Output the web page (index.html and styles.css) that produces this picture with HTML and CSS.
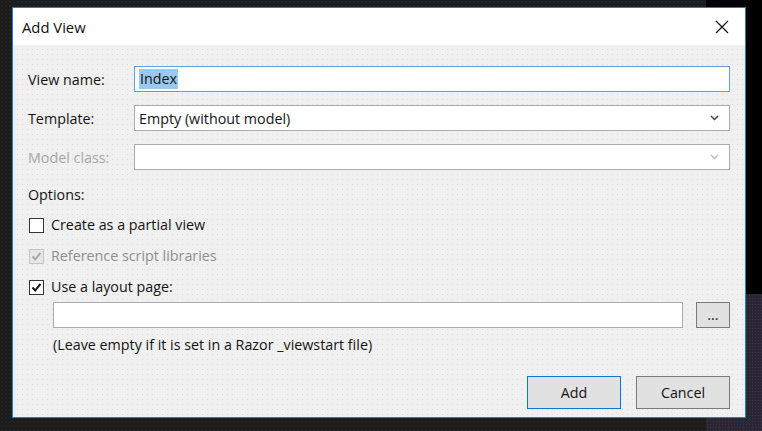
FILE: index.html
```html
<!DOCTYPE html>
<html>
<head>
<meta charset="utf-8">
<link rel="stylesheet" href="styles.css">
</head>
<body>
<div class="desk">
  <div class="bg-black"></div>
  <div class="bg-purple"></div>
  <div class="dialog">
    <div class="titlebar">
      <span class="title">Add View</span>
      <svg class="close" width="14" height="14" viewBox="0 0 14 14"><path d="M1 1 L13 13 M13 1 L1 13" stroke="#111" stroke-width="1.2" fill="none"/></svg>
    </div>
    <div class="body">
      <div class="form">
        <label class="lbl">View name:</label>
        <div class="field focused"><span class="sel">Index</span></div>
        <label class="lbl">Template:</label>
        <div class="field combo"><span>Empty (without model)</span><svg class="chev" width="9" height="6" viewBox="0 0 9 6"><path d="M1 1 L4.5 4.5 L8 1" stroke="#444" stroke-width="1.5" fill="none"/></svg></div>
        <label class="lbl disabled">Model class:</label>
        <div class="field combo"><span></span><svg class="chev" width="9" height="6" viewBox="0 0 9 6"><path d="M1 1 L4.5 4.5 L8 1" stroke="#bdbdbd" stroke-width="1.5" fill="none"/></svg></div>
      </div>
      <div class="options">Options:</div>
      <div class="check"><span class="box"></span><span>Create as a partial view</span></div>
      <div class="check disabled"><span class="box dis"><svg width="13" height="13" viewBox="0 0 13 13"><path d="M2.5 6.5 L5.2 9.5 L10.5 2.8" stroke="#a9a9a9" stroke-width="2" fill="none"/></svg></span><span>Reference script libraries</span></div>
      <div class="check"><span class="box"><svg width="13" height="13" viewBox="0 0 13 13"><path d="M2.5 6.5 L5.2 9.5 L10.5 2.8" stroke="#111" stroke-width="2" fill="none"/></svg></span><span>Use a layout page:</span></div>
      <div class="layout-row">
        <div class="field grow"></div>
        <button class="btn dots">...</button>
      </div>
      <div class="hint">(Leave empty if it is set in a Razor _viewstart file)</div>
      <div class="actions">
        <button class="btn primary">Add</button>
        <button class="btn">Cancel</button>
      </div>
    </div>
  </div>
</div>
</body>
</html>
```
FILE: styles.css
```css
html, body {
  margin: 0;
  padding: 0;
}
body {
  width: 762px;
  height: 431px;
  overflow: hidden;
  background: #1c1c1c;
  font-family: "Open Sans", "Noto Sans", "Liberation Sans", sans-serif;
  font-size: 14.3px;
  color: #141414;
}
.desk {
  position: relative;
  width: 762px;
  height: 431px;
  background-color: #1c1c1c;
  background-image: radial-gradient(circle, #2a2a2a 0.6px, transparent 0.8px);
  background-size: 4px 4px;
}
.bg-black {
  position: absolute;
  left: 706px;
  top: 0;
  width: 56px;
  height: 294px;
  background: #000;
}
.bg-purple {
  position: absolute;
  left: 706px;
  top: 294px;
  width: 56px;
  height: 137px;
  background-color: #2b2633;
  background-image: radial-gradient(circle, #3e3648 0.6px, transparent 0.8px);
  background-size: 3px 3px;
}
.dialog {
  position: absolute;
  left: 12px;
  top: 7px;
  width: 732px;
  height: 409px;
  border: 1px solid #1a82d6;
  display: flex;
  flex-direction: column;
  background: #f0f0f0;
}
.titlebar {
  height: 37px;
  background: #fff;
  display: flex;
  align-items: center;
  justify-content: space-between;
  padding: 0 16px 0 9px;
}
.title {
  font-size: 14.8px;
  color: #111;
  margin-top: 1px;
}
.body {
  flex: 1;
  padding: 21px 15px 8px 15px;
  display: flex;
  flex-direction: column;
  background-color: #f0f0f0;
  background-image: radial-gradient(circle, #dcdcdc 0.55px, transparent 0.85px);
  background-size: 5px 5px;
  background-position: 2px 2px;
}
.form {
  display: grid;
  grid-template-columns: 106px 1fr;
  row-gap: 13px;
  align-items: center;
}
.lbl.disabled {
  color: #a6a6a6;
}
.field {
  height: 24px;
  background: #fff;
  border: 1px solid #acacac;
  display: flex;
  align-items: center;
  padding: 0 4px;
  box-sizing: content-box;
}
.field.focused {
  border-color: #5aa0e3;
}
.sel {
  background: #99c9ef;
  line-height: 20px;
  padding: 0 1px;
}
.combo {
  justify-content: space-between;
  padding-right: 10px;
}
.chev {
  display: block;
}
.options {
  margin-top: 15px;
  line-height: 20px;
}
.check {
  display: flex;
  align-items: center;
  margin-top: 9px;
  line-height: 22px;
  margin-left: 1px;
}
.check.disabled {
  color: #8f8f8f;
}
.box {
  width: 13px;
  height: 13px;
  border: 1px solid #333;
  background: #fff;
  margin-right: 7px;
  display: flex;
}
.box.dis {
  border-color: #c4c4c4;
  background: #e6e6e6;
}
.layout-row {
  display: flex;
  gap: 13px;
  margin-top: 4px;
  margin-left: 25px;
}
.grow {
  flex: 1;
}
.btn {
  font-family: inherit;
  font-size: 14.3px;
  color: #141414;
  background: #e1e1e1;
  border: 1px solid #7a7a7a;
  padding: 0;
  margin: 0;
}
.dots {
  width: 34px;
  height: 26px;
  line-height: 20px;
}
.hint {
  margin-left: 25px;
  margin-top: 7px;
  line-height: 20px;
}
.actions {
  margin-top: auto;
  display: flex;
  justify-content: flex-end;
  gap: 15px;
}
.actions .btn {
  width: 94px;
  height: 33px;
}
.btn.primary {
  border-color: #0a78d6;
}
```
